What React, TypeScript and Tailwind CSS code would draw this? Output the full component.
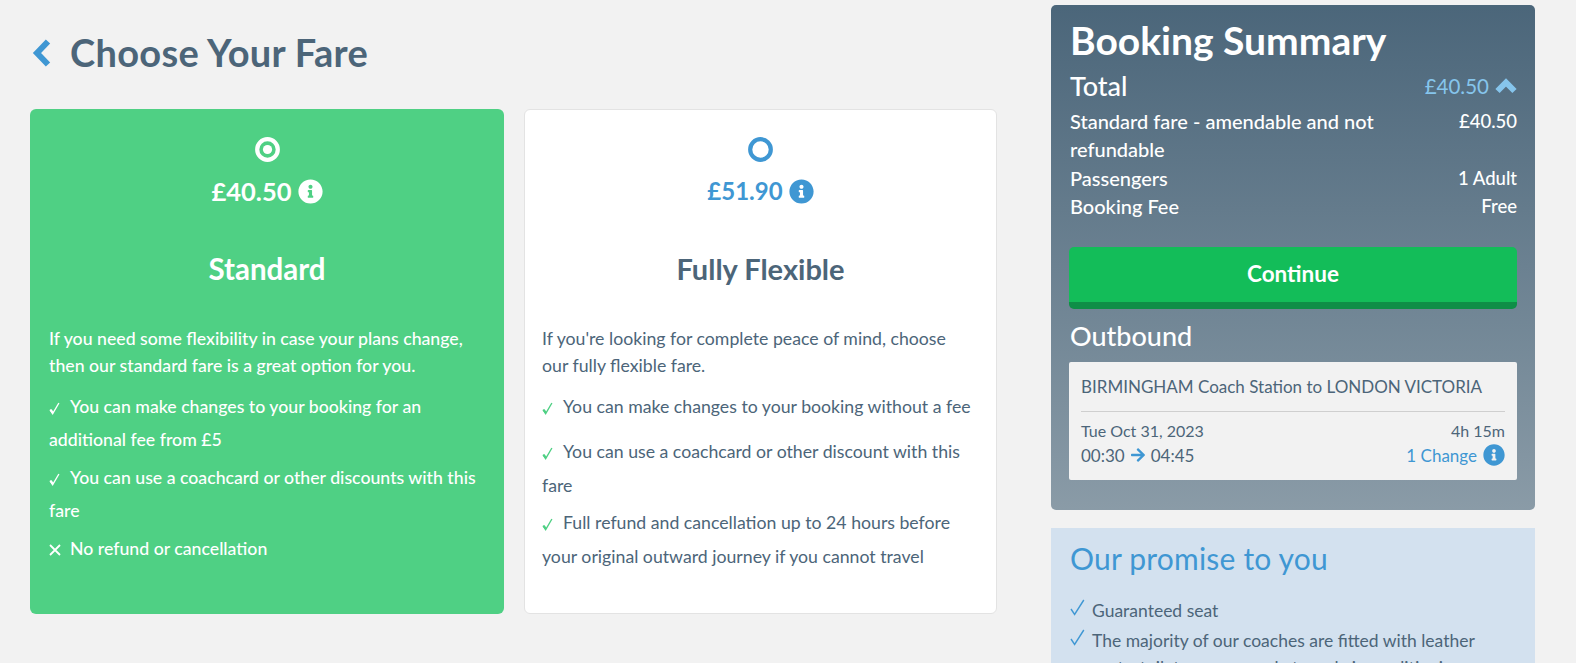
import type { ReactNode } from "react";
import { FaArrowRight, FaInfoCircle } from "react-icons/fa";

const font = { fontFamily: "Lato, 'Noto Sans', sans-serif" };

function Check({ className }: { className: string }) {
  return (
    <svg viewBox="0 0 12 14" className={className} fill="none" stroke="currentColor">
      <path d="M1.2 8.2 L4 12.6 L10.8 1" strokeWidth="1.5" />
      <path d="M1.6 8.4 L4.2 11.6" strokeWidth="2.4" />
    </svg>
  );
}

function ThinCheck() {
  return (
    <svg viewBox="0 0 15 17" className="mt-[2px] h-[17px] w-[15px] shrink-0 text-[#3f97d3]" fill="none" stroke="currentColor">
      <path d="M1 10 L4.6 15.4 L13.8 1" strokeWidth="1.4" />
    </svg>
  );
}

function Cross() {
  return (
    <svg viewBox="0 0 12 12" className="mr-[9px] inline-block h-[12px] w-[12px] align-[-1px]" fill="none" stroke="currentColor" strokeWidth="1.8">
      <path d="M1 1 L11 11 M11 1 L1 11" />
    </svg>
  );
}

function Bullet({ tick, children, className }: { tick: string; children: ReactNode; className: string }) {
  return (
    <p className={className}>
      <Check className={`mr-[10px] inline-block h-[13px] w-[11px] align-[-2px] ${tick}`} />
      {children}
    </p>
  );
}

function Row({ left, right }: { left: string; right: string }) {
  return (
    <div className="flex justify-between text-[20px] leading-[28.4px] font-medium text-white">
      <span className="w-[350px]">{left}</span>
      <span className="text-[18.5px]">{right}</span>
    </div>
  );
}

function Chevron({ points, className, viewBox }: { points: string; className: string; viewBox: string }) {
  return (
    <svg viewBox={viewBox} className={className} fill="none" stroke="currentColor" strokeWidth="6">
      <polyline points={points} />
    </svg>
  );
}

export default function App() {
  return (
    <div style={font} className="flex h-[663px] w-[1576px] overflow-hidden bg-[#f2f2f2] text-[#4c6579]">
      <main className="w-[1051px] shrink-0 pl-[30px]">
        <div className="flex h-[109px] items-start pt-[27px]">
          <Chevron viewBox="0 0 20 28" points="17,2.5 6,14 17,25.5" className="mt-[12px] ml-[1px] h-[28px] w-[20px] text-[#3f97d3]" />
          <h1 className="ml-[19px] text-[38px] leading-[50px] font-bold tracking-[0.3px]">Choose Your Fare</h1>
        </div>
        <div className="flex gap-[20px]">
          <section className="h-[505px] w-[474px] rounded-[6px] bg-[#4fd084] px-[19px] pt-[28px] text-white">
            <svg viewBox="0 0 25 25" className="mx-auto h-[25px] w-[25px]" fill="none" stroke="currentColor">
              <circle cx="12.5" cy="12.5" r="10.3" strokeWidth="4.2" />
              <circle cx="12.5" cy="12.5" r="4.6" fill="currentColor" stroke="none" />
            </svg>
            <div className="mt-[11px] flex items-center justify-center gap-[6px] text-[25.5px] leading-[36px] font-bold">
              £40.50 <FaInfoCircle className="h-[25px] w-[25px]" />
            </div>
            <h2 className="mt-[42px] text-center text-[29.5px] leading-[36px] font-bold">Standard</h2>
            <p className="mt-[38px] text-[17.7px] leading-[27px] font-medium">
              If you need some flexibility in case your plans change,<br />then our standard fare is a great option for you.
            </p>
            <Bullet tick="" className="mt-[11px] text-[17.7px] leading-[33px] font-medium">You can make changes to your booking for an<br />additional fee from £5</Bullet>
            <Bullet tick="" className="mt-[5px] text-[17.7px] leading-[33px] font-medium">You can use a coachcard or other discounts with this<br />fare</Bullet>
            <p className="mt-[5px] text-[17.7px] leading-[33px] font-medium"><Cross />No refund or cancellation</p>
          </section>
          <section className="h-[505px] w-[473px] rounded-[6px] border border-[#e3e3e3] bg-white px-[17px] pt-[27px]">
            <svg viewBox="0 0 25 25" className="mx-auto h-[25px] w-[25px] text-[#3f97d3]" fill="none" stroke="currentColor">
              <circle cx="12.5" cy="12.5" r="10.3" strokeWidth="4.2" />
            </svg>
            <div className="mt-[11px] flex items-center justify-center gap-[6px] text-[24px] leading-[36px] font-bold text-[#3f97d3]">
              £51.90 <FaInfoCircle className="h-[25px] w-[25px]" />
            </div>
            <h2 className="mt-[42px] text-center text-[29px] leading-[36px] font-bold">Fully Flexible</h2>
            <p className="mt-[38px] text-[17.7px] leading-[27px]">
              If you're looking for complete peace of mind, choose<br />our fully flexible fare.
            </p>
            <Bullet tick="text-[#4fd084]" className="mt-[11px] text-[17.7px] leading-[33px]">You can make changes to your booking without a fee</Bullet>
            <Bullet tick="text-[#4fd084]" className="mt-[12px] text-[17.7px] leading-[34px]">You can use a coachcard or other discount with this<br />fare</Bullet>
            <Bullet tick="text-[#4fd084]" className="mt-[3px] text-[17.7px] leading-[34px]">Full refund and cancellation up to 24 hours before<br />your original outward journey if you cannot travel</Bullet>
          </section>
        </div>
      </main>
      <aside className="w-[484px] shrink-0 pt-[5px]">
        <div className="h-[505px] rounded-[5px] bg-gradient-to-b from-[#4b667a] to-[#8a9ba7] px-[18px] pt-[12px]">
          <h2 className="pl-[1px] text-[39px] leading-[46px] font-bold text-white">Booking Summary</h2>
          <div className="mt-[4px] flex items-center justify-between pl-[1px]">
            <span className="text-[27px] leading-[38px] font-medium text-white">Total</span>
            <span className="flex items-center gap-[6px] text-[20.5px] text-[#86c5ec]">
              £40.50
              <Chevron viewBox="0 0 22 16" points="2.5,13 11,4.5 19.5,13" className="h-[16px] w-[22px]" />
            </span>
          </div>
          <div className="mt-[2px] pl-[1px]">
            <Row left="Standard fare - amendable and not refundable" right="£40.50" />
            <Row left="Passengers" right="1 Adult" />
            <Row left="Booking Fee" right="Free" />
          </div>
          <button className="mt-[26px] block h-[62px] w-full rounded-[5px] border-b-[7px] border-[#0f8e47] bg-[#13bd59] text-[22.5px] font-bold text-white">Continue</button>
          <h3 className="mt-[8px] pl-[1px] text-[27px] leading-[38px] font-medium text-white">Outbound</h3>
          <div className="mt-[7px] h-[118px] rounded-[2px] bg-[#f2f2f2] px-[12px] pt-[12px] text-[17px]">
            <div className="h-[38px] border-b border-[#cfcfcf] leading-[26px]">BIRMINGHAM Coach Station to LONDON VICTORIA</div>
            <div className="mt-[6px] flex justify-between text-[16px] leading-[25px]"><span>Tue Oct 31, 2023</span><span>4h 15m</span></div>
            <div className="flex justify-between leading-[25px]">
              <span className="flex items-center gap-[5px]">00:30 <FaArrowRight className="h-[16px] w-[16px] text-[#3f97d3]" /> 04:45</span>
              <span className="flex items-center gap-[6px] text-[#3f97d3]">1 Change <FaInfoCircle className="h-[22px] w-[22px]" /></span>
            </div>
          </div>
        </div>
        <div className="mt-[18px] bg-[#d3e1ef] px-[19px] pt-[10px]">
          <h2 className="text-[30px] leading-[40px] tracking-[0.2px] text-[#3f97d3]">Our promise to you</h2>
          <div className="mt-[19px] flex flex-col gap-[3px] text-[17.5px] leading-[27px]">
            <div className="flex gap-[7px]"><ThinCheck /><span>Guaranteed seat</span></div>
            <div className="flex gap-[7px]"><ThinCheck /><span>The majority of our coaches are fitted with leather<br />seats, toilets, power sockets and air conditioning</span></div>
          </div>
        </div>
      </aside>
    </div>
  );
}
